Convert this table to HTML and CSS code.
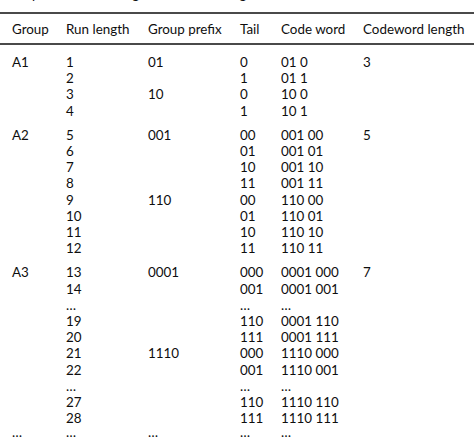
FILE: index.html
```html
<!DOCTYPE html>
<html>
<head>
<meta charset="utf-8">
<link rel="stylesheet" href="styles.css">
</head>
<body>
<div class="caption">Example of the run length based decoding</div>
<table class="codes">
  <colgroup>
    <col class="c-group"><col class="c-run"><col class="c-prefix"><col class="c-tail"><col class="c-word"><col class="c-len">
  </colgroup>
  <thead>
    <tr><th>Group</th><th>Run length</th><th>Group prefix</th><th>Tail</th><th>Code word</th><th>Codeword length</th></tr>
  </thead>
  <tbody>
    <tr class="first"><td>A1</td><td>1</td><td>01</td><td>0</td><td>01 0</td><td>3</td></tr>
    <tr><td></td><td>2</td><td></td><td>1</td><td>01 1</td><td></td></tr>
    <tr><td></td><td>3</td><td>10</td><td>0</td><td>10 0</td><td></td></tr>
    <tr><td></td><td>4</td><td></td><td>1</td><td>10 1</td><td></td></tr>

    <tr class="first"><td>A2</td><td>5</td><td>001</td><td>00</td><td>001 00</td><td>5</td></tr>
    <tr><td></td><td>6</td><td></td><td>01</td><td>001 01</td><td></td></tr>
    <tr><td></td><td>7</td><td></td><td>10</td><td>001 10</td><td></td></tr>
    <tr><td></td><td>8</td><td></td><td>11</td><td>001 11</td><td></td></tr>
    <tr><td></td><td>9</td><td>110</td><td>00</td><td>110 00</td><td></td></tr>
    <tr><td></td><td>10</td><td></td><td>01</td><td>110 01</td><td></td></tr>
    <tr><td></td><td>11</td><td></td><td>10</td><td>110 10</td><td></td></tr>
    <tr><td></td><td>12</td><td></td><td>11</td><td>110 11</td><td></td></tr>

    <tr class="first"><td>A3</td><td>13</td><td>0001</td><td>000</td><td>0001 000</td><td>7</td></tr>
    <tr><td></td><td>14</td><td></td><td>001</td><td>0001 001</td><td></td></tr>
    <tr><td></td><td>…</td><td></td><td>…</td><td>…</td><td></td></tr>
    <tr><td></td><td>19</td><td></td><td>110</td><td>0001 110</td><td></td></tr>
    <tr><td></td><td>20</td><td></td><td>111</td><td>0001 111</td><td></td></tr>
    <tr><td></td><td>21</td><td>1110</td><td>000</td><td>1110 000</td><td></td></tr>
    <tr><td></td><td>22</td><td></td><td>001</td><td>1110 001</td><td></td></tr>
    <tr><td></td><td>…</td><td></td><td>…</td><td>…</td><td></td></tr>
    <tr><td></td><td>27</td><td></td><td>110</td><td>1110 110</td><td></td></tr>
    <tr><td></td><td>28</td><td></td><td>111</td><td>1110 111</td><td></td></tr>

    <tr class="last"><td>…</td><td>…</td><td>…</td><td>…</td><td>…</td><td></td></tr>
  </tbody>
</table>
</body>
</html>
```
FILE: styles.css
```css
html, body {
  margin: 0;
  padding: 0;
  background: #ffffff;
}
body {
  font-family: Lato, "Open Sans", "Liberation Sans", sans-serif;
  font-size: 13.4px;
  color: #0e0e0e;
  width: 474px;
  height: 438px;
  overflow: hidden;
}
.caption {
  height: 16px;
  line-height: 16px;
  margin-top: -14px;
  margin-bottom: 10px;
  white-space: nowrap;
}
.codes {
  width: 474px;
  border-collapse: collapse;
  table-layout: fixed;
  border-top: 2px solid #4a4a4a;
}
.c-group { width: 66px; }
.c-run { width: 82px; }
.c-prefix { width: 92px; }
.c-tail { width: 41px; }
.c-word { width: 82px; }
.c-len { width: 111px; }
.codes th {
  font-weight: normal;
  text-align: left;
  padding: 0;
  height: 29px;
  line-height: 16px;
  vertical-align: middle;
  white-space: nowrap;
}
.codes thead tr {
  border-bottom: 2px solid #4a4a4a;
}
.codes td {
  padding: 0;
  line-height: 16.2px;
  height: 16.2px;
  white-space: nowrap;
  vertical-align: top;
}
.codes th:first-child,
.codes td:first-child {
  padding-left: 12px;
}
.codes tr.first td {
  padding-top: 8px;
}
.codes tr.last td {
  padding-top: 1px;
  line-height: 10px;
  height: 10px;
}
.codes tbody tr:first-child td {
  padding-top: 9px;
}
```
